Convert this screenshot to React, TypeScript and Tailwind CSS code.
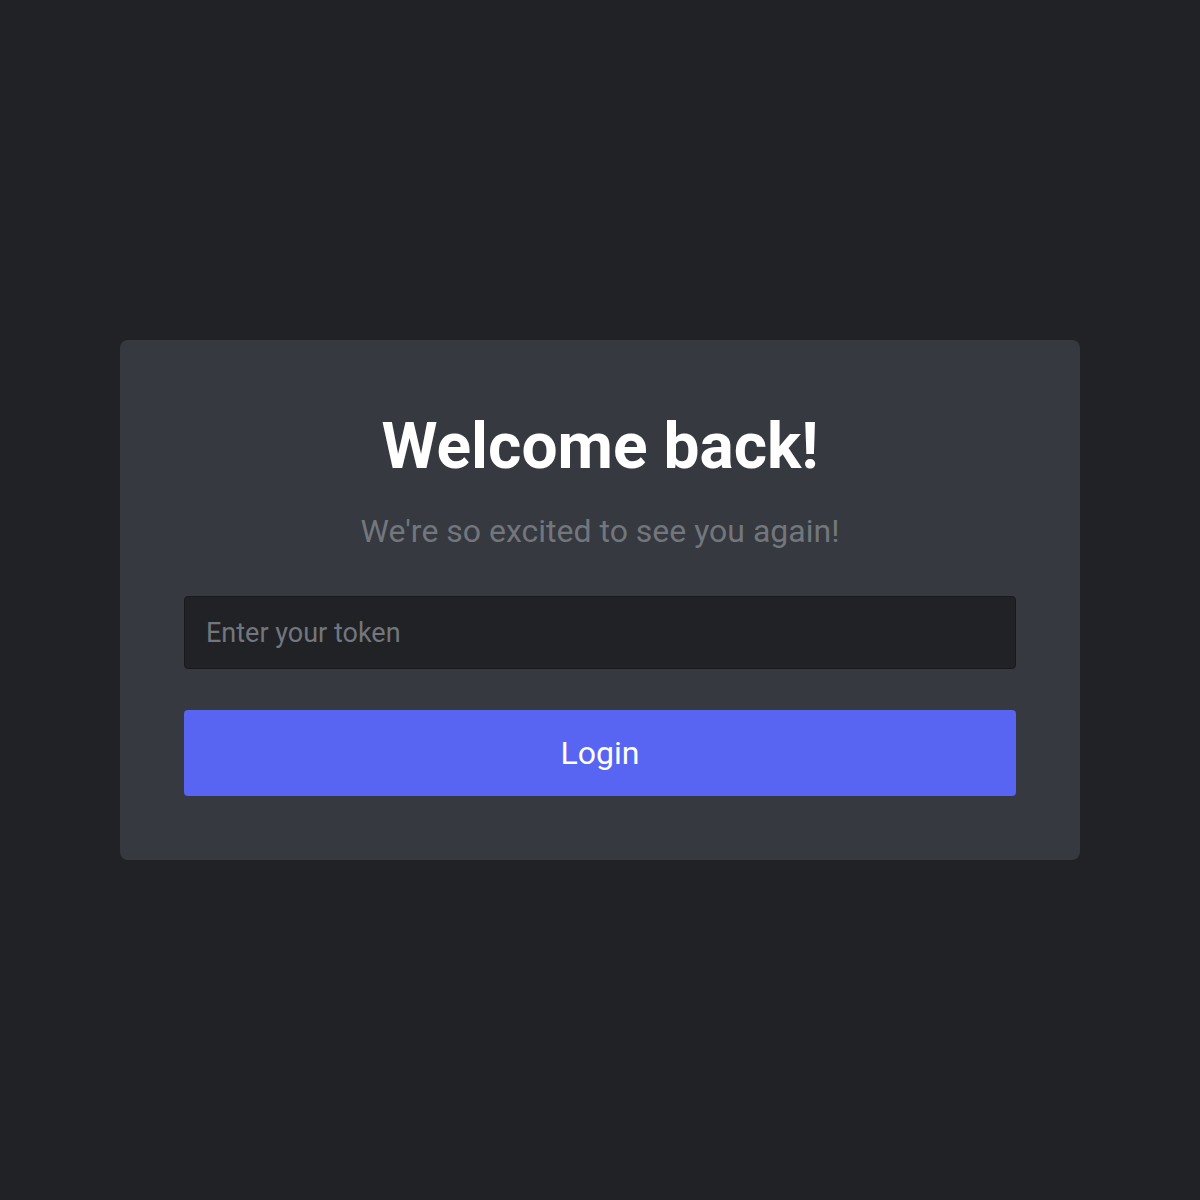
import { useState } from "react"

export default function App() {
  const [token, setToken] = useState("")

  return (
    <div
      className="min-h-screen w-full flex items-center justify-center bg-[#202225]"
      style={{ fontFamily: "Roboto, 'Liberation Sans', sans-serif" }}
    >
      <div className="w-[960px] rounded-lg bg-[#36393f] px-16 pt-[67px] pb-16">
        <h1 className="text-center text-[64px] leading-[80px] font-bold text-white">Welcome back!</h1>
        <p className="mt-[24px] text-center text-[32px] leading-[40px] text-[#72767d]">
          We're so excited to see you again!
        </p>

        <input
          type="text"
          value={token}
          onChange={(e) => setToken(e.target.value)}
          placeholder="Enter your token"
          className="mt-[45px] block w-full h-[73px] rounded border border-[#18191c] bg-[#202225] px-[21px] text-[27px] text-white placeholder:text-[#72767d] outline-none"
        />

        <button className="mt-[41px] block w-full h-[86px] rounded bg-[#5865f2] text-[32px] text-white">
          Login
        </button>
      </div>
    </div>
  )
}
